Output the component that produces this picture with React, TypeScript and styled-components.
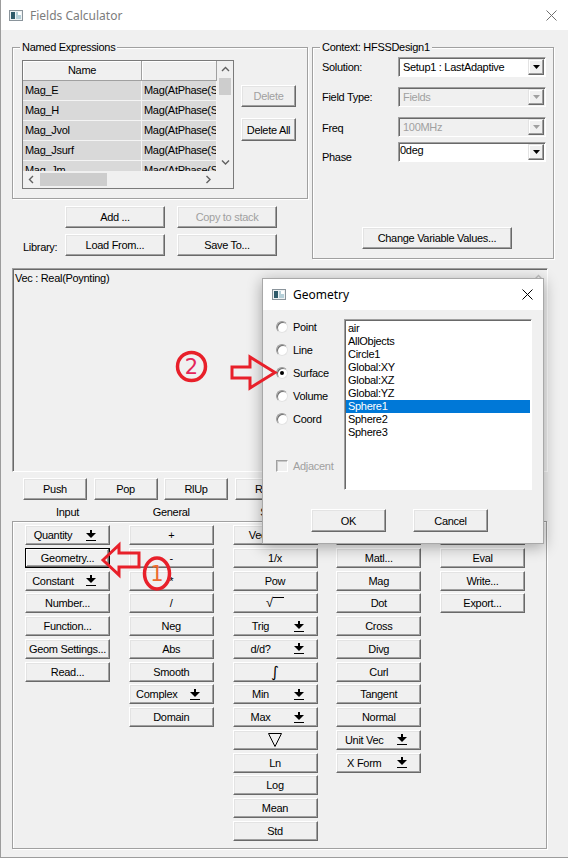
import React from "react";
import styled, { createGlobalStyle, css } from "styled-components";

const GlobalStyle = createGlobalStyle`
  * { box-sizing: border-box; }
  html, body { margin: 0; padding: 0; background: #ffffff; }
  body {
    font-family: "Liberation Sans", Arial, sans-serif;
    font-size: 11px;
    font-weight: 400;
    letter-spacing: -0.3px;
    color: #000;
  }
  button { font: inherit; letter-spacing: inherit; }
`;

const RED = "#e8202a";

// ---------- window frame ----------

const Window = styled.div`
  position: relative;
  width: 568px;
  height: 858px;
  background: #f0f0f0;
  border-left: 1px solid #9c9c9c;
  border-bottom: 1px solid #9c9c9c;
  overflow: hidden;
`;

const TitleBar = styled.div<{ $active?: boolean }>`
  height: ${(p) => (p.$active ? 31 : 30)}px;
  flex: none;
  background: #fff;
  display: flex;
  align-items: center;
  padding-left: ${(p) => (p.$active ? 9 : 8)}px;
  gap: 7px;
  font-family: "Noto Sans", "Open Sans", sans-serif;
  font-size: 12px;
  letter-spacing: 0;
  color: ${(p) => (p.$active ? "#000" : "#7c7c7c")};
`;

const CloseX = styled.svg<{ $right: number }>`
  margin-left: auto;
  margin-right: ${(p) => p.$right}px;
`;

const AppIcon = () => (
  <svg width="14" height="11" viewBox="0 0 14 11">
    <rect x="0.5" y="0.5" width="13" height="10" fill="#eef2f4" stroke="#8a949b" />
    <rect x="2" y="2" width="4" height="7" fill="#2e5a6a" />
    <rect x="7" y="2" width="5" height="7" fill="#b6d0d9" />
    <rect x="9" y="2" width="3" height="3" fill="#ffffff" />
  </svg>
);

const Close = ({ color, right }: { color: string; right: number }) => (
  <CloseX $right={right} width="11" height="11" viewBox="0 0 11 11">
    <path d="M0.5 0.5 L10.5 10.5 M10.5 0.5 L0.5 10.5" stroke={color} strokeWidth="1" />
  </CloseX>
);

// ---------- common controls ----------

const Btn = styled.button<{ $w?: number; $h?: number; $focus?: boolean }>`
  width: ${(p) => p.$w ?? 85}px;
  height: ${(p) => p.$h ?? 20}px;
  flex: none;
  padding: 0;
  background: #f0f0f0;
  color: #000;
  border: 1px solid;
  border-color: #ffffff #696969 #696969 #ffffff;
  box-shadow: inset -1px -1px #a0a0a0, inset 1px 1px #e3e3e3;
  display: flex;
  align-items: center;
  justify-content: center;
  white-space: nowrap;
  cursor: default;
  ${(p) =>
    p.$focus &&
    css`
      border-color: #000;
      box-shadow: inset -1px -1px #696969, inset 1px 1px #ffffff, inset -2px -2px #a0a0a0;
    `}
  &:disabled {
    color: #a0a0a0;
  }
`;

const Group = styled.div<{ $w: number; $h?: number }>`
  width: ${(p) => p.$w}px;
  ${(p) => p.$h !== undefined && css`height: ${p.$h}px;`}
  flex: none;
  border: 1px solid #a0a0a0;
  box-shadow: inset 1px 1px #fff, 1px 1px #fff;
  display: flex;
  flex-direction: column;
`;

const Legend = styled.div`
  align-self: flex-start;
  margin: -7px 0 0 7px;
  padding: 0 2px;
  line-height: 13px;
  background: #f0f0f0;
`;

const Sunken = css`
  border: 1px solid;
  border-color: #a0a0a0 #ffffff #ffffff #a0a0a0;
  box-shadow: inset 1px 1px #696969;
`;

const Chevron = ({ dir, color = "#606060" }: { dir: "up" | "down" | "left" | "right"; color?: string }) => {
  const pts = {
    up: "1,5 4.5,1.5 8,5",
    down: "1,1.5 4.5,5 8,1.5",
    left: "5,1 1.5,4.5 5,8",
    right: "1.5,1 5,4.5 1.5,8",
  }[dir];
  const v = dir === "up" || dir === "down";
  return (
    <svg width={v ? 9 : 7} height={v ? 7 : 9} viewBox={v ? "0 0 9 7" : "0 0 7 9"}>
      <polyline points={pts} fill="none" stroke={color} strokeWidth="1.4" />
    </svg>
  );
};

// ---------- top section ----------

const TopSection = styled.div`
  display: flex;
  align-items: flex-start;
  gap: 4px;
  margin-top: 17px;
  padding-left: 11px;
`;

const NamedColumn = styled.div`
  width: 296px;
  display: flex;
  flex-direction: column;
`;

const NamedInner = styled.div`
  display: flex;
  gap: 7px;
  margin-top: 6px;
  padding: 0 0 9px 9px;
`;

const Table = styled.div`
  width: 212px;
  height: 129px;
  border: 1px solid #7a7a7a;
  background: #fff;
  display: grid;
  grid-template-columns: 194px 16px;
  grid-template-rows: 110px 17px;
`;

const Cells = styled.div`
  overflow: hidden;
  display: flex;
  flex-direction: column;
`;

const TRow = styled.div`
  display: flex;
  height: 20px;
  flex: none;
`;

const HeadCell = styled.div<{ $w: number }>`
  width: ${(p) => p.$w}px;
  flex: none;
  background: #f0f0f0;
  border-right: 1px solid #a0a0a0;
  border-bottom: 1px solid #a0a0a0;
  box-shadow: inset 1px 1px #fff;
  text-align: center;
  line-height: 19px;
`;

const Cell = styled.div<{ $w: number }>`
  width: ${(p) => p.$w}px;
  flex: none;
  background: #d9d9d9;
  border-right: 1px solid #f4f4f4;
  border-bottom: 1px solid #f4f4f4;
  padding-left: 2px;
  line-height: 19px;
  white-space: nowrap;
  overflow: hidden;
`;

const VScroll = styled.div`
  background: #f0f0f0;
  display: flex;
  flex-direction: column;
`;

const HScroll = styled.div`
  background: #f0f0f0;
  display: flex;
`;

const ArrowBox = styled.div<{ $horizontal?: boolean }>`
  width: ${(p) => (p.$horizontal ? 17 : 16)}px;
  height: 17px;
  flex: none;
  display: flex;
  align-items: center;
  justify-content: center;
`;

const Thumb = styled.div<{ $horizontal?: boolean; $len: number }>`
  background: #cdcdcd;
  flex: none;
  ${(p) =>
    p.$horizontal
      ? css`width: ${p.$len}px; margin: 2px 0;`
      : css`height: ${p.$len}px; margin: 0 2px;`}
`;

const Spacer = styled.div`
  flex: 1;
`;

const Corner = styled.div`
  background: #f0f0f0;
`;

const SideButtons = styled.div`
  display: flex;
  flex-direction: column;
`;

const LibraryGrid = styled.div`
  display: grid;
  grid-template-columns: 30px 100px 100px;
  column-gap: 12px;
  row-gap: 6px;
  margin-top: 7px;
  padding-left: 11px;
  align-items: center;
`;

const LibLabel = styled.div`
  padding-top: 4px;
`;

const ContextRow = styled.div<{ $mt: number }>`
  display: flex;
  align-items: flex-start;
  margin-top: ${(p) => p.$mt}px;
  padding-left: 9px;
`;

const FieldLabel = styled.div<{ $shift?: number }>`
  width: 76px;
  line-height: 20px;
  margin-top: ${(p) => p.$shift ?? 0}px;
`;

const Combo = styled.div<{ $disabled?: boolean; $editable?: boolean }>`
  width: 148px;
  height: 20px;
  display: flex;
  align-items: center;
  ${Sunken};
  background: ${(p) => (p.$disabled ? "#f0f0f0" : "#fff")};
  color: ${(p) => (p.$disabled ? "#a0a0a0" : "#000")};
  padding-left: ${(p) => (p.$editable ? 1 : 4)}px;
`;

const ComboText = styled.span<{ $editable?: boolean }>`
  flex: 1;
  margin-top: ${(p) => (p.$editable ? -5 : 0)}px;
`;

const DropBtn = styled.div`
  width: 16px;
  height: 16px;
  margin-right: 1px;
  background: #f0f0f0;
  border: 1px solid;
  border-color: #e3e3e3 #696969 #696969 #e3e3e3;
  box-shadow: inset -1px -1px #a0a0a0, inset 1px 1px #fff;
  display: flex;
  align-items: center;
  justify-content: center;
`;

// ---------- stack ----------

const StackArea = styled.div`
  width: 536px;
  height: 204px;
  margin: 9px 0 0 11px;
  ${Sunken};
  display: flex;
`;

const StackText = styled.div`
  flex: 1;
  padding: 3px 2px;
  line-height: 13px;
`;

const StackScroll = styled.div`
  width: 17px;
  display: flex;
  flex-direction: column;
  justify-content: space-between;
`;

const StackButtons = styled.div`
  display: flex;
  gap: 6.5px;
  margin-top: 6px;
  padding-left: 22px;
`;

// ---------- calculator buttons ----------

const ColHeads = styled.div`
  display: grid;
  grid-template-columns: repeat(5, 85px);
  column-gap: 18.75px;
  margin: 5px 0 0 24px;
  height: 16px;
  line-height: 15px;
  text-align: center;
`;

const CalcBox = styled.div`
  width: 535px;
  height: 328px;
  margin-left: 11px;
  border: 1px solid #a0a0a0;
  box-shadow: inset 1px 1px #fff, 1px 1px #fff;
  padding: 3px 0 0 12px;
  display: grid;
  grid-template-columns: repeat(5, 85px);
  column-gap: 18.75px;
  align-items: start;
`;

const CalcCol = styled.div`
  display: flex;
  flex-direction: column;
  gap: 2.77px;
`;

const MenuBtn = styled(Btn)`
  justify-content: flex-start;
`;

const MenuText = styled.span`
  width: 54px;
  text-align: center;
`;

const MenuIcon = styled.span`
  margin-left: 6px;
  display: flex;
`;

const SqrtGlyph = styled.span`
  display: inline-flex;
  align-items: flex-start;
  font-size: 13px;
  line-height: 14px;
`;

const SqrtBar = styled.span`
  width: 11px;
  height: 10px;
  border-top: 1px solid #000;
  margin-top: 1px;
`;

const Integral = styled.span`
  font-family: "DejaVu Sans", sans-serif;
  font-size: 15px;
  line-height: 16px;
`;

const DownToBar = () => (
  <svg width="10" height="11" viewBox="0 0 10 11">
    <rect x="4" y="0" width="2" height="3" fill="#000" />
    <polygon points="0,3 10,3 5,8" fill="#000" />
    <rect x="0" y="10" width="10" height="1" fill="#000" />
  </svg>
);

const Nabla = () => (
  <svg width="14" height="14" viewBox="0 0 14 14">
    <polygon points="0.5,0.5 13.5,0.5 7,13.5" fill="none" stroke="#000" strokeWidth="1" />
  </svg>
);

// ---------- geometry dialog ----------

const Dialog = styled.div`
  position: absolute;
  left: 261px;
  top: 278px;
  width: 282px;
  height: 266px;
  background: #f0f0f0;
  border: 1px solid #a8a8a8;
  box-shadow: 0 3px 14px rgba(0, 0, 0, 0.33);
  display: flex;
  flex-direction: column;
`;

const DialogMain = styled.div`
  display: flex;
  padding: 9px 0 0 13px;
`;

const OptionCol = styled.div`
  width: 68px;
  display: flex;
  flex-direction: column;
  margin-top: -4px;
`;

const OptionRow = styled.label<{ $disabled?: boolean; $mt?: number }>`
  display: flex;
  align-items: center;
  height: 23px;
  gap: 5px;
  margin-top: ${(p) => p.$mt ?? 0}px;
  color: ${(p) => (p.$disabled ? "#a0a0a0" : "#000")};
`;

const Radio = styled.span<{ $on?: boolean }>`
  width: 12px;
  height: 12px;
  border-radius: 50%;
  background: #fff;
  border: 1px solid;
  border-color: #9a9a9a #e3e3e3 #e3e3e3 #9a9a9a;
  box-shadow: inset 1px 1px #707070;
  display: flex;
  align-items: center;
  justify-content: center;
  &::after {
    content: "";
    width: 4px;
    height: 4px;
    border-radius: 50%;
    background: #000;
    display: ${(p) => (p.$on ? "block" : "none")};
  }
`;

const CheckBox = styled.span`
  width: 12px;
  height: 12px;
  background: #f0f0f0;
  ${Sunken};
  box-shadow: inset 1px 1px #c8c8c8;
`;

const ListBox = styled.div`
  width: 188px;
  height: 171px;
  background: #fff;
  ${Sunken};
  padding: 2px 1px;
`;

const ListItem = styled.div<{ $sel?: boolean }>`
  height: 13px;
  line-height: 13px;
  padding-left: 2px;
  background: ${(p) => (p.$sel ? "#0078d7" : "transparent")};
  color: ${(p) => (p.$sel ? "#fff" : "#000")};
`;

const DialogButtons = styled.div`
  display: flex;
  gap: 27px;
  margin-top: 19px;
  padding-left: 48px;
`;

// ---------- annotations ----------

const Mark = styled.svg<{ $x: number; $y: number }>`
  position: absolute;
  left: ${(p) => p.$x}px;
  top: ${(p) => p.$y}px;
  overflow: visible;
`;

const MarkDigit = styled.text`
  font-family: "DejaVu Sans", sans-serif;
  font-size: 21px;
  letter-spacing: 0;
`;

// ---------- data ----------

type CalcItem = { label: React.ReactNode; menu?: boolean; focus?: boolean };

const calcCols: CalcItem[][] = [
  [
    { label: "Quantity", menu: true },
    { label: "Geometry...", focus: true },
    { label: "Constant", menu: true },
    { label: "Number..." },
    { label: "Function..." },
    { label: "Geom Settings..." },
    { label: "Read..." },
  ],
  [
    { label: "+" },
    { label: "-" },
    { label: "*" },
    { label: "/" },
    { label: "Neg" },
    { label: "Abs" },
    { label: "Smooth" },
    { label: "Complex", menu: true },
    { label: "Domain" },
  ],
  [
    { label: "Vec?", menu: true },
    { label: "1/x" },
    { label: "Pow" },
    {
      label: (
        <SqrtGlyph>
          √<SqrtBar />
        </SqrtGlyph>
      ),
    },
    { label: "Trig", menu: true },
    { label: "d/d?", menu: true },
    { label: <Integral>∫</Integral> },
    { label: "Min", menu: true },
    { label: "Max", menu: true },
    { label: <Nabla /> },
    { label: "Ln" },
    { label: "Log" },
    { label: "Mean" },
    { label: "Std" },
  ],
  [
    { label: "Scal?", menu: true },
    { label: "Matl..." },
    { label: "Mag" },
    { label: "Dot" },
    { label: "Cross" },
    { label: "Divg" },
    { label: "Curl" },
    { label: "Tangent" },
    { label: "Normal" },
    { label: "Unit Vec", menu: true },
    { label: "X Form", menu: true },
  ],
  [{ label: "Value" }, { label: "Eval" }, { label: "Write..." }, { label: "Export..." }],
];

const named = ["Mag_E", "Mag_H", "Mag_Jvol", "Mag_Jsurf", "Mag_Jm"];

const contextRows = [
  { label: "Solution:", value: "Setup1 : LastAdaptive", mt: 3 },
  { label: "Field Type:", value: "Fields", mt: 10, disabled: true },
  { label: "Freq", value: "100MHz", mt: 10, disabled: true, shift: 1 },
  { label: "Phase", value: "0deg", mt: 4, editable: true, shift: 5 },
];

const geometryKinds = ["Point", "Line", "Surface", "Volume", "Coord"];
const geometryItems = ["air", "AllObjects", "Circle1", "Global:XY", "Global:XZ", "Global:YZ", "Sphere1", "Sphere2", "Sphere3"];

const DropArrow = ({ color }: { color: string }) => (
  <svg width="7" height="4" viewBox="0 0 7 4">
    <polygon points="0,0 7,0 3.5,4" fill={color} />
  </svg>
);

export default function App() {
  return (
    <>
      <GlobalStyle />
      <Window>
        <TitleBar>
          <AppIcon />
          <span>Fields Calculator</span>
          <Close color="#6f6f6f" right={11} />
        </TitleBar>

        <TopSection>
          <NamedColumn>
            <Group $w={296}>
              <Legend>Named Expressions</Legend>
              <NamedInner>
                <Table>
                  <Cells>
                    <TRow>
                      <HeadCell $w={119}>Name</HeadCell>
                      <HeadCell $w={75} />
                    </TRow>
                    {named.map((n) => (
                      <TRow key={n}>
                        <Cell $w={119}>{n}</Cell>
                        <Cell $w={75}>Mag(AtPhase(Smooth(</Cell>
                      </TRow>
                    ))}
                  </Cells>
                  <VScroll>
                    <ArrowBox>
                      <Chevron dir="up" />
                    </ArrowBox>
                    <Thumb $len={17} />
                    <Spacer />
                    <ArrowBox>
                      <Chevron dir="down" />
                    </ArrowBox>
                  </VScroll>
                  <HScroll>
                    <ArrowBox $horizontal>
                      <Chevron dir="left" />
                    </ArrowBox>
                    <Thumb $horizontal $len={67} />
                    <Spacer />
                    <ArrowBox $horizontal>
                      <Chevron dir="right" />
                    </ArrowBox>
                  </HScroll>
                  <Corner />
                </Table>
                <SideButtons>
                  <Btn $w={55} $h={22} disabled style={{ marginTop: 25 }}>
                    Delete
                  </Btn>
                  <Btn $w={55} $h={23} style={{ marginTop: 11 }}>
                    Delete All
                  </Btn>
                </SideButtons>
              </NamedInner>
            </Group>
            <LibraryGrid>
              <span />
              <Btn $w={100} $h={22}>Add ...</Btn>
              <Btn $w={100} $h={22} disabled>
                Copy to stack
              </Btn>
              <LibLabel>Library:</LibLabel>
              <Btn $w={100} $h={22}>Load From...</Btn>
              <Btn $w={100} $h={22}>Save To...</Btn>
            </LibraryGrid>
          </NamedColumn>

          <Group $w={242} $h={212}>
            <Legend>Context: HFSSDesign1</Legend>
            {contextRows.map((r) => (
              <ContextRow key={r.label} $mt={r.mt}>
                <FieldLabel $shift={r.shift}>{r.label}</FieldLabel>
                <Combo $disabled={r.disabled} $editable={r.editable}>
                  <ComboText $editable={r.editable}>{r.value}</ComboText>
                  <DropBtn>
                    <DropArrow color={r.disabled ? "#a0a0a0" : "#000"} />
                  </DropBtn>
                </Combo>
              </ContextRow>
            ))}
            <Spacer />
            <Btn $w={150} $h={22} style={{ margin: "0 0 9px 49px" }}>
              Change Variable Values...
            </Btn>
          </Group>
        </TopSection>

        <StackArea>
          <StackText>Vec : Real(Poynting)</StackText>
          <StackScroll>
            <ArrowBox>
              <Chevron dir="up" color="#bfbfbf" />
            </ArrowBox>
            <ArrowBox>
              <Chevron dir="down" color="#bfbfbf" />
            </ArrowBox>
          </StackScroll>
        </StackArea>

        <StackButtons>
          {["Push", "Pop", "RlUp", "RlDn", "Exch", "Clear", "Undo"].map((b) => (
            <Btn key={b} $w={64} $h={22}>
              {b}
            </Btn>
          ))}
        </StackButtons>

        <ColHeads>
          {["Input", "General", "Scalar", "Vector", "Output"].map((h) => (
            <span key={h}>{h}</span>
          ))}
        </ColHeads>

        <CalcBox>
          {calcCols.map((col, i) => (
            <CalcCol key={i}>
              {col.map((it, j) =>
                it.menu ? (
                  <MenuBtn key={j}>
                    <MenuText>{it.label}</MenuText>
                    <MenuIcon>
                      <DownToBar />
                    </MenuIcon>
                  </MenuBtn>
                ) : (
                  <Btn key={j} $focus={it.focus}>
                    {it.label}
                  </Btn>
                )
              )}
            </CalcCol>
          ))}
        </CalcBox>

        <Dialog>
          <TitleBar $active>
            <AppIcon />
            <span>Geometry</span>
            <Close color="#000" right={10} />
          </TitleBar>
          <DialogMain>
            <OptionCol>
              {geometryKinds.map((k) => (
                <OptionRow key={k}>
                  <Radio $on={k === "Surface"} />
                  {k}
                </OptionRow>
              ))}
              <OptionRow $disabled $mt={24}>
                <CheckBox />
                Adjacent
              </OptionRow>
            </OptionCol>
            <ListBox>
              {geometryItems.map((g) => (
                <ListItem key={g} $sel={g === "Sphere1"}>
                  {g}
                </ListItem>
              ))}
            </ListBox>
          </DialogMain>
          <DialogButtons>
            <Btn $w={75} $h={23}>OK</Btn>
            <Btn $w={75} $h={23}>Cancel</Btn>
          </DialogButtons>
        </Dialog>

        {/* red annotations drawn over the screenshot */}
        <Mark $x={173} $y={349} width="35" height="35">
          <circle cx="17.5" cy="17.5" r="14" fill="none" stroke={RED} strokeWidth="3.5" />
          <MarkDigit x="17.5" y="25" textAnchor="middle" fill="#e5245a">
            2
          </MarkDigit>
        </Mark>
        <Mark $x={228} $y={354} width="50" height="36">
          <path d="M3,13 H21 V3 L46,18.5 L21,34 V24 H3 Z" fill="none" stroke={RED} strokeWidth="3" strokeLinejoin="miter" />
        </Mark>
        <Mark $x={99} $y={543} width="42" height="36">
          <path d="M3,17 L19,2 V10 H39 V24 H19 V32 Z" fill="none" stroke={RED} strokeWidth="3" />
        </Mark>
        <Mark $x={141} $y={556} width="30" height="36">
          <ellipse cx="15" cy="17.5" rx="12.5" ry="15.5" fill="none" stroke={RED} strokeWidth="3.5" />
          <MarkDigit x="15" y="25" textAnchor="middle" fill="#ee6a2e">
            1
          </MarkDigit>
        </Mark>
      </Window>
    </>
  );
}
